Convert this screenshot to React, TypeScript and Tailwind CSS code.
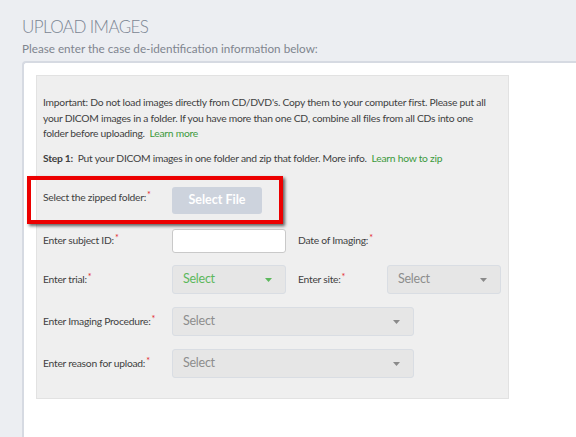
import React from 'react';

const font = { fontFamily: 'Lato, "Open Sans", sans-serif' };

function Req() {
  return <span className="text-[#e3262b] text-[9px] align-top leading-none ml-[1px]">*</span>;
}

function Caret({ green }: { green?: boolean }) {
  return (
    <svg width="7" height="4" viewBox="0 0 7 4" className="shrink-0">
      <path d="M0 0 L7 0 L3.5 4 Z" fill={green ? '#5cb85c' : '#8a8a8a'} />
    </svg>
  );
}

function Select({ width, green }: { width: string; green?: boolean }) {
  return (
    <div
      className={`${width} h-[29px] flex items-center justify-between pl-[10px] pr-[13px] bg-[#e6e6e6] border border-[#d9dde3] rounded-[3px] text-[12.5px] ${
        green ? 'text-[#5cb85c]' : 'text-[#8d8d8d]'
      }`}
    >
      <span>Select</span>
      <Caret green={green} />
    </div>
  );
}

export default function App() {
  return (
    <div className="h-[437px] bg-[#eceef2] pl-[22px] pt-[15px] overflow-hidden" style={font}>
      <h1 className="text-[17px] font-light text-[#7b8592] leading-[24px] tracking-[-0.6px]">UPLOAD IMAGES</h1>
      <p className="text-[11.7px] text-[#7f858f] leading-[16px] mt-[1px]">
        Please enter the case de-identification information below:
      </p>

      <div className="mt-[5px] bg-white border-t-2 border-l-2 border-[#d6dae2] rounded-tl-[4px] pl-[12px] pt-[12px] h-[376px]">
        <div className="w-[473px] bg-[#efefef] border border-[#e2e2e2] pl-[6px] pt-[19px] pb-[20px] text-[10.3px] tracking-[-0.25px] text-[#3f3f3f]">
          <p className="w-[449px] leading-[15.5px]">
            Important: Do not load images directly from CD/DVD's. Copy them to your computer first. Please put all
            your DICOM images in a folder. If you have more than one CD, combine all files from all CDs into one
            folder before uploading.&nbsp;&nbsp;<span className="text-[#3c9a3c]">Learn more</span>
          </p>
          <p className="mt-[9px] leading-[15.5px]">
            <span className="font-bold">Step 1:</span>&nbsp; Put your DICOM images in one folder and zip that folder. More
            info.&nbsp;&nbsp;<span className="text-[#3c9a3c]">Learn how to zip</span>
          </p>

          <div className="mt-[10px] -ml-[16px] w-[256px] h-[48px] border-[4px] border-[#ec0000] shadow-[2px_2px_3px_rgba(0,0,0,0.6)] flex items-center pl-[12px]">
            <div className="w-[129px] pb-[4px]">
              Select the zipped folder:
              <Req />
            </div>
            <div className="w-[90px] h-[27px] rounded-[3px] bg-[#cdd3dd] text-white font-bold text-[12.5px] tracking-normal flex items-center justify-center">
              Select File
            </div>
          </div>

          <div className="mt-[5px] flex items-center h-[24px]">
            <div className="w-[129px]">
              Enter subject ID:
              <Req />
            </div>
            <div className="w-[114px] h-[24px] bg-white border border-[#c9c9c9] rounded-[3px]" />
            <div className="ml-[12px]">
              Date of Imaging:
              <Req />
            </div>
          </div>

          <div className="mt-[12px] flex items-center">
            <div className="w-[129px]">
              Enter trial:
              <Req />
            </div>
            <Select width="w-[114px]" green />
            <div className="ml-[12px] w-[89px]">
              Enter site:
              <Req />
            </div>
            <Select width="w-[114px]" />
          </div>

          <div className="mt-[13px] flex items-center">
            <div className="w-[129px]">
              Enter Imaging Procedure:
              <Req />
            </div>
            <Select width="w-[242px]" />
          </div>

          <div className="mt-[13px] flex items-center">
            <div className="w-[129px]">
              Enter reason for upload:
              <Req />
            </div>
            <Select width="w-[242px]" />
          </div>
        </div>
      </div>
    </div>
  );
}
